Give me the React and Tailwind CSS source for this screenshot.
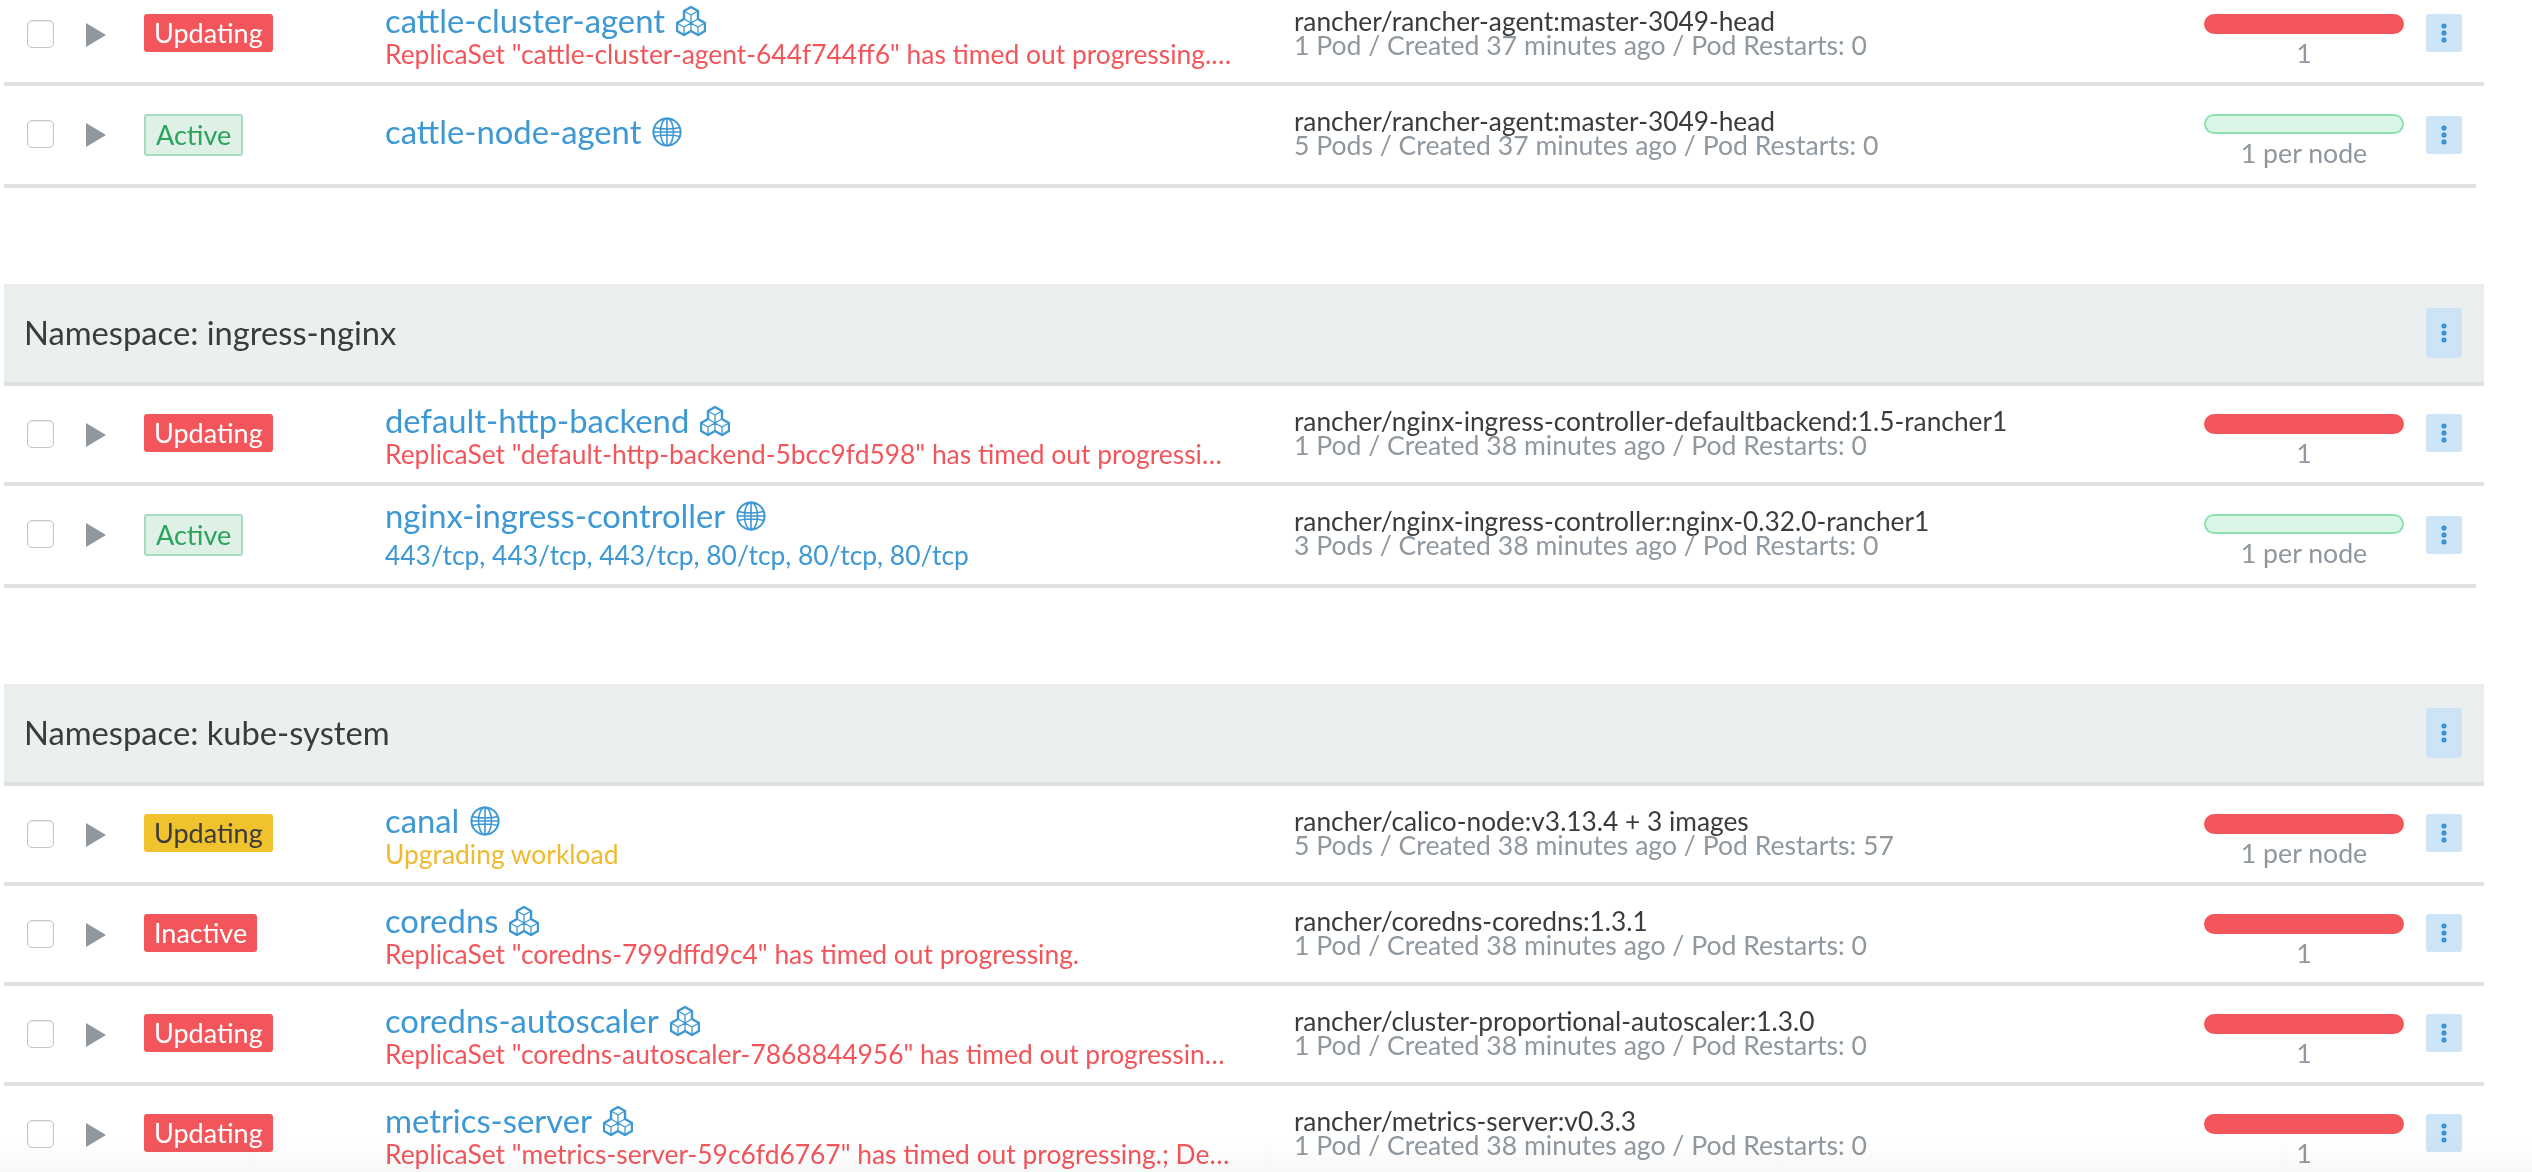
import { MoreVertical } from "lucide-react";

const font = "font-['Lato','Noto_Sans',sans-serif]";

const cube = "cube";
const globe = "globe";

function DaemonIcon() {
  return (
    <svg width="30" height="30" viewBox="0 0 30 30" fill="none" stroke="#3d98d3" strokeLinejoin="round" className="shrink-0">
      <path d="M15 1l7 4v8l7 4v8l-7 4-7-4-7 4-7-4v-8l7-4V5z" strokeWidth="2.4" />
      <path d="M8 5l7 4 7-4M15 9v8M8 13l7 4 7-4M1 17l7 4 7-4 7 4 7-4M8 21v8M22 21v8M15 17v8" strokeWidth="1.3" />
    </svg>
  );
}

function GlobeIcon() {
  return (
    <svg width="30" height="30" viewBox="0 0 30 30" fill="none" stroke="#3d98d3" strokeWidth="1.6" className="shrink-0">
      <circle cx="15" cy="15" r="13.6" strokeWidth="2" />
      <ellipse cx="15" cy="15" rx="6.5" ry="13.6" />
      <path d="M15 1.4v27.2M2 10.5c7 2 19 2 26 0M2 19.5c7-2 19-2 26 0M1.4 15h27.2" />
    </svg>
  );
}

function Badge({ state, kind }) {
  const styles = {
    red: "bg-[#f2565b] text-white h-[38px] px-[10px] rounded-[3px]",
    yellow: "bg-[#f0c22e] text-[#3b3b3b] h-[38px] px-[10px] rounded-[3px]",
    green: "bg-[#dff1e7] text-[#2aa45a] border-2 border-[#a8dcbf] h-[42px] px-[10px] rounded-[3px]",
  };
  return <span className={`inline-flex items-center pb-[2px] text-[27px] leading-none ${styles[kind]}`}>{state}</span>;
}

function MenuButton({ className = "" }) {
  return (
    <button type="button" className={`flex items-center justify-center w-[36px] shrink-0 rounded-[3px] bg-[#cde3f6] text-[#2b8bd4] ${className}`}>
      <MoreVertical size={24} strokeWidth={3} />
    </button>
  );
}

function Row({ badge, kind, name, icon, sub, subClass, ports, image, meta, bar, scale, tall, narrow }) {
  return (
    <div className={`flex border-b-4 border-[#dfe0e2] pt-[28px] ${tall ? "h-[102px]" : "h-[100px]"} ${narrow ? "mr-[8px]" : ""}`}>
      <div className="w-[140px] shrink-0 flex pl-[23px] pt-[6px]">
        <span className="w-[27px] h-[28px] border border-[#c4c5c7] rounded-[5px] bg-white shadow-[inset_0_1px_2px_rgba(0,0,0,0.08)]" />
        <span className="ml-[32px] mt-[3px] w-0 h-0 border-y-[12px] border-y-transparent border-l-[20px] border-l-[#8f979f]" />
      </div>
      <div className="w-[241px] shrink-0"><Badge state={badge} kind={kind} /></div>
      <div className={`w-[909px] shrink-0 min-w-0 ${ports ? "-mt-[19px]" : "-mt-[14px]"}`}>
        <div className={`flex items-center gap-[11px] h-[42px] text-[32.8px] leading-none text-[#3d98d3] ${sub ? "" : "mt-[11px]"}`}>
          {name}
          {icon === cube ? <DaemonIcon /> : <GlobeIcon />}
        </div>
        {sub && <div className={`w-[850px] truncate text-[26.4px] leading-[30px] ${ports ? "mt-[3px]" : "-mt-[3px]"} ${subClass}`}>{sub}</div>}
      </div>
      <div className="flex-1 min-w-0 -mt-[5px]">
        <div className="text-[26.3px] leading-[24px] text-[#3b3b3b]">{image}</div>
        <div className="text-[26.6px] leading-[24px] text-[#8f979f]">{meta}</div>
      </div>
      <div className="w-[222px] shrink-0">
        <div className={`w-[200px] h-[20px] rounded-[10px] ${bar === "green" ? "bg-[#dbf5e6] border-2 border-[#8be0ad]" : "bg-[#f2565b]"}`} />
        <div className="w-[200px] text-center text-[26.7px] leading-[30px] mt-[4px] text-[#8f979f]">{scale}</div>
      </div>
      <MenuButton className={`h-[38px] ${tall ? "mt-[2px]" : ""} ${narrow ? "mr-[14px]" : "mr-[22px]"}`} />
    </div>
  );
}

function GroupHeader({ title, className = "" }) {
  return (
    <div className={`flex items-center justify-between h-[102px] bg-[#ebeff0] border-b-4 border-[#dfe0e2] pl-[20px] pr-[22px] ${className}`}>
      <span className="text-[32.7px] text-[#3b3b3b]">{title}</span>
      <MenuButton className="h-[50px]" />
    </div>
  );
}

const RED = "text-[#f2565b]";
const YELLOW = "text-[#f0b92e]";

export default function App() {
  return (
    <div className={`relative h-[1172px] overflow-hidden bg-white pl-[4px] pr-[48px] ${font}`}>
      <div className="-mt-[14px]">
        <Row badge="Updating" kind="red" name="cattle-cluster-agent" icon={cube} sub={'ReplicaSet "cattle-cluster-agent-644f744ff6" has timed out progressing.; Deployment does not have minimum availability.'} subClass={RED} image="rancher/rancher-agent:master-3049-head" meta="1 Pod / Created 37 minutes ago / Pod Restarts: 0" bar="red" scale="1" />
        <Row badge="Active" kind="green" name="cattle-node-agent" icon={globe} image="rancher/rancher-agent:master-3049-head" meta="5 Pods / Created 37 minutes ago / Pod Restarts: 0" bar="green" scale="1 per node" tall narrow />
      </div>

      <GroupHeader title="Namespace: ingress-nginx" className="mt-[96px]" />
      <Row badge="Updating" kind="red" name="default-http-backend" icon={cube} sub={'ReplicaSet "default-http-backend-5bcc9fd598" has timed out progressing.; Deployment does not have minimum availability.'} subClass={RED} image="rancher/nginx-ingress-controller-defaultbackend:1.5-rancher1" meta="1 Pod / Created 38 minutes ago / Pod Restarts: 0" bar="red" scale="1" />
      <Row badge="Active" kind="green" name="nginx-ingress-controller" icon={globe} sub="443/tcp, 443/tcp, 443/tcp, 80/tcp, 80/tcp, 80/tcp" subClass="text-[#3d98d3]" ports image="rancher/nginx-ingress-controller:nginx-0.32.0-rancher1" meta="3 Pods / Created 38 minutes ago / Pod Restarts: 0" bar="green" scale="1 per node" tall narrow />

      <GroupHeader title="Namespace: kube-system" className="mt-[96px]" />
      <Row badge="Updating" kind="yellow" name="canal" icon={globe} sub="Upgrading workload" subClass={YELLOW} image="rancher/calico-node:v3.13.4 + 3 images" meta="5 Pods / Created 38 minutes ago / Pod Restarts: 57" bar="red" scale="1 per node" />
      <Row badge="Inactive" kind="red" name="coredns" icon={cube} sub={'ReplicaSet "coredns-799dffd9c4" has timed out progressing.'} subClass={RED} image="rancher/coredns-coredns:1.3.1" meta="1 Pod / Created 38 minutes ago / Pod Restarts: 0" bar="red" scale="1" />
      <Row badge="Updating" kind="red" name="coredns-autoscaler" icon={cube} sub={'ReplicaSet "coredns-autoscaler-7868844956" has timed out progressing.; Deployment does not have minimum availability.'} subClass={RED} image="rancher/cluster-proportional-autoscaler:1.3.0" meta="1 Pod / Created 38 minutes ago / Pod Restarts: 0" bar="red" scale="1" />
      <Row badge="Updating" kind="red" name="metrics-server" icon={cube} sub={'ReplicaSet "metrics-server-59c6fd6767" has timed out progressing.; Deployment does not have minimum availability.'} subClass={RED} image="rancher/metrics-server:v0.3.3" meta="1 Pod / Created 38 minutes ago / Pod Restarts: 0" bar="red" scale="1" />

      {/* faint fade along the bottom edge */}
      <div className="absolute inset-x-0 bottom-0 h-[32px] bg-gradient-to-b from-white to-[#f7f7f7] mix-blend-multiply pointer-events-none" />
    </div>
  );
}
